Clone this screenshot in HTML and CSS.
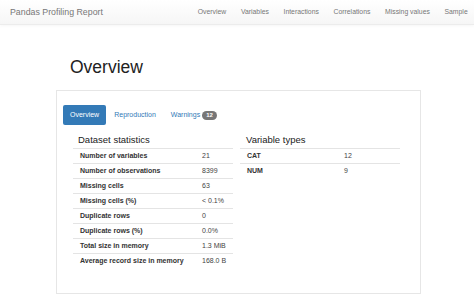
FILE: index.html
```html
<!DOCTYPE html>
<html>
<head>
<meta charset="utf-8">
<link rel="stylesheet" href="styles.css">
</head>
<body>
<nav class="navbar">
  <span class="brand">Pandas Profiling Report</span>
  <ul class="nav-links">
    <li><a>Overview</a></li>
    <li><a>Variables</a></li>
    <li><a>Interactions</a></li>
    <li><a>Correlations</a></li>
    <li><a>Missing values</a></li>
    <li><a>Sample</a></li>
  </ul>
</nav>
<main class="content">
  <h1 class="page-title">Overview</h1>
  <section class="panel">
    <ul class="pills">
      <li class="pill active">Overview</li>
      <li class="pill">Reproduction</li>
      <li class="pill">Warnings <span class="badge">12</span></li>
    </ul>
    <div class="cols">
      <div class="col col-stats">
        <h4 class="col-title">Dataset statistics</h4>
        <table class="stats">
          <tr><th>Number of variables</th><td>21</td></tr>
          <tr><th>Number of observations</th><td>8399</td></tr>
          <tr><th>Missing cells</th><td>63</td></tr>
          <tr><th>Missing cells (%)</th><td>&lt; 0.1%</td></tr>
          <tr><th>Duplicate rows</th><td>0</td></tr>
          <tr><th>Duplicate rows (%)</th><td>0.0%</td></tr>
          <tr><th>Total size in memory</th><td>1.3 MiB</td></tr>
          <tr><th>Average record size in memory</th><td>168.0 B</td></tr>
        </table>
      </div>
      <div class="col col-types">
        <h4 class="col-title">Variable types</h4>
        <table class="stats">
          <tr><th>CAT</th><td>12</td></tr>
          <tr><th>NUM</th><td>9</td></tr>
        </table>
      </div>
    </div>
  </section>
</main>
</body>
</html>
```

FILE: styles.css
```css
* { box-sizing: border-box; }
html, body { margin: 0; padding: 0; background: #fff; }
body {
  font-family: "Liberation Sans", Arial, sans-serif;
  color: #333;
  overflow: hidden;
}
.navbar {
  height: 25px;
  display: flex;
  align-items: center;
  justify-content: space-between;
  background: linear-gradient(#ffffff, #f6f6f6);
  border-bottom: 1px solid #ececec;
  box-shadow: 0 1px 3px rgba(0,0,0,0.04);
}
.brand {
  font-size: 8.8px;
  color: #777;
  padding-left: 10px;
  line-height: 24px;
}
.nav-links {
  display: flex;
  list-style: none;
  margin: 0 -1px 0 0;
  padding: 0;
}
.nav-links a {
  display: block;
  font-size: 6.85px;
  color: #777;
  padding: 0 7.3px;
  line-height: 24px;
}
.content {
  padding-left: 56px;
}
.page-title {
  font-size: 17.5px;
  font-weight: normal;
  line-height: 20px;
  margin: 32px 0 13px 14px;
  color: #222;
}
.panel {
  width: 365px;
  border: 1px solid #e6e6e6;
  padding: 14px 0 24px 6px;
}
.pills {
  display: flex;
  list-style: none;
  margin: 0;
  padding: 0;
  gap: 1px;
}
.pill {
  font-size: 7px;
  line-height: 10px;
  padding: 5px 7px;
  color: #337ab7;
  border-radius: 2px;
  display: flex;
  align-items: center;
}
.pill.active {
  background: #337ab7;
  color: #fff;
}
.badge {
  display: inline-block;
  background: #777;
  color: #fff;
  font-weight: bold;
  font-size: 6px;
  line-height: 6px;
  padding: 1.5px 4px;
  border-radius: 5px;
  margin-left: 2px;
}
.cols {
  display: grid;
  grid-template-columns: 160px 160px;
  gap: 7px;
  padding-left: 10px;
}
.col-title {
  font-size: 9.5px;
  font-weight: normal;
  line-height: 11px;
  margin: 9px 0 3px 5px;
  color: #222;
}
.col-types .col-title { margin-left: 6px; }
.stats {
  width: 100%;
  border-collapse: collapse;
}
.stats th, .stats td {
  font-size: 7px;
  line-height: 14px;
  height: 15px;
  padding: 0 0 0 7px;
  border-top: 1px solid #e4e4e4;
  text-align: left;
  vertical-align: middle;
  white-space: nowrap;
}
.stats th {
  font-weight: bold;
  color: #333;
}
.stats td { color: #444; }
.col-stats .stats th { width: 122px; }
.col-types .stats th { width: 97px; }
```
